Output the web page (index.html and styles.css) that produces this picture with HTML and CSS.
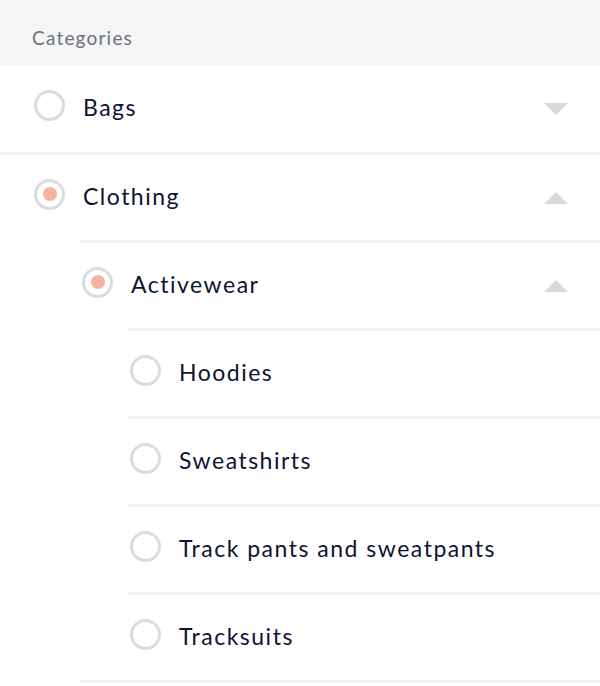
FILE: index.html
```html
<!DOCTYPE html>
<html lang="en">
<head>
    <meta charset="UTF-8">
    <meta name="viewport" content="width=device-width, initial-scale=1.0">
    <title>Categories</title>
    <link rel="stylesheet" href="styles.css">
</head>
<body>

    <div class="header">Categories</div>

    <ul class="tree">
        <li class="node">
            <div class="row">
                <span class="radio"></span>
                <span class="label">Bags</span>
                <span class="caret down"></span>
            </div>
        </li>
        <li class="node">
            <div class="row">
                <span class="radio checked"></span>
                <span class="label">Clothing</span>
                <span class="caret up"></span>
            </div>
            <ul class="sub level-1">
                <li class="node">
                    <div class="row">
                        <span class="radio checked"></span>
                        <span class="label">Activewear</span>
                        <span class="caret up"></span>
                    </div>
                    <ul class="sub">
                        <li class="node">
                            <div class="row">
                                <span class="radio"></span>
                                <span class="label">Hoodies</span>
                            </div>
                        </li>
                        <li class="node">
                            <div class="row">
                                <span class="radio"></span>
                                <span class="label">Sweatshirts</span>
                            </div>
                        </li>
                        <li class="node">
                            <div class="row">
                                <span class="radio"></span>
                                <span class="label">Track pants and sweatpants</span>
                            </div>
                        </li>
                        <li class="node">
                            <div class="row">
                                <span class="radio"></span>
                                <span class="label">Tracksuits</span>
                            </div>
                        </li>
                    </ul>
                </li>
            </ul>
        </li>
    </ul>

</body>
</html>
```

FILE: styles.css
```css
body {
    margin: 0;
    font-family: Lato, "Open Sans", sans-serif;
    background-color: #ffffff;
    color: #0e1333;
}
.header {
    height: 65px;
    box-sizing: border-box;
    padding: 26px 0 0 32px;
    background-color: #f5f5f5;
    color: #6c7080;
    font-size: 19px;
    letter-spacing: 1.2px;
}
.tree, .sub {
    list-style: none;
    margin: 0;
    padding: 0;
}
.sub {
    padding-left: 48px;
}
.tree > .node + .node,
.sub > .node {
    border-top: 3px solid #f3f3f3;
}
.level-1 {
    padding-left: 80px;
}
.level-1 > .node:last-child {
    border-bottom: 3px solid #f3f3f3;
}
.row {
    display: flex;
    align-items: center;
    height: 85px;
    padding: 0 32px 0 2px;
}
.tree > .node > .row {
    padding-left: 34px;
}
.tree > .node:first-child > .row {
    height: 87px;
}
.radio {
    width: 31px;
    height: 31px;
    box-sizing: border-box;
    margin-bottom: 7px;
    border: 3px solid #dcdcdc;
    border-radius: 50%;
    display: flex;
    align-items: center;
    justify-content: center;
    flex-shrink: 0;
}
.radio.checked::after {
    content: "";
    width: 14px;
    height: 14px;
    border-radius: 50%;
    background-color: #f2b4a0;
}
.label {
    margin: 0 0 4px 18px;
    font-size: 23px;
    letter-spacing: 1.5px;
    flex: 1;
}
.caret {
    width: 0;
    height: 0;
    border-left: 12px solid transparent;
    border-right: 12px solid transparent;
}
.caret.down {
    border-top: 12px solid #d9d9d9;
}
.caret.up {
    border-bottom: 12px solid #d9d9d9;
}
```
